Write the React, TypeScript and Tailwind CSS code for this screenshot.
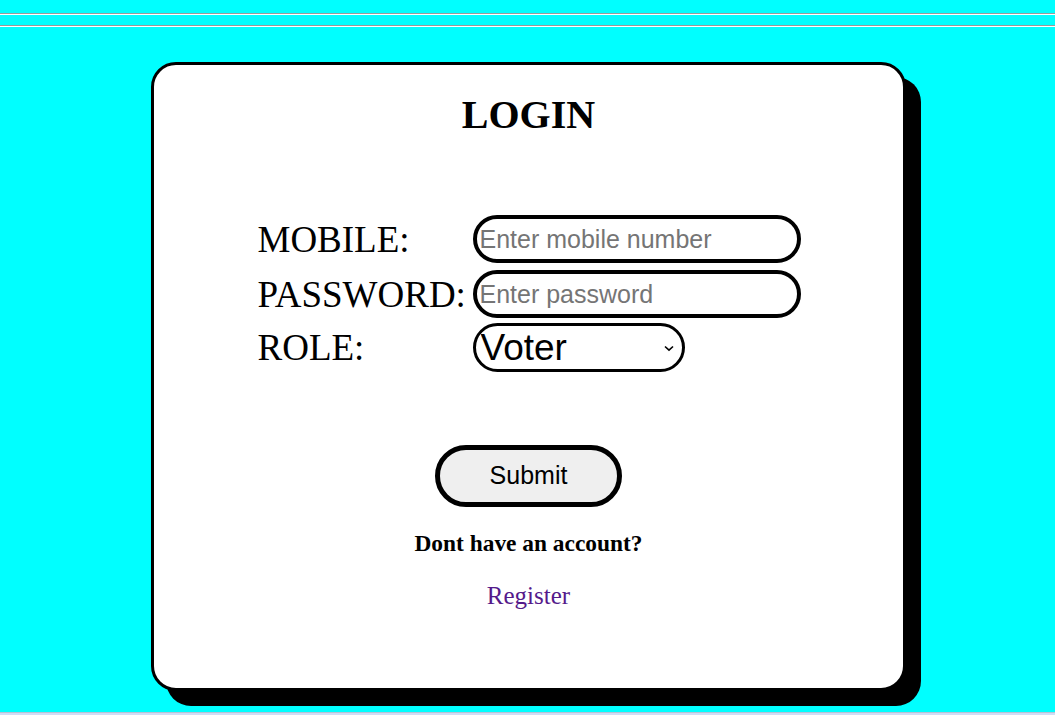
import React from "react";

export default function App() {
  return (
    <div className="w-full h-[715px] flex flex-col overflow-hidden font-['Liberation_Serif',serif]">
      <div className="bg-[#00ffff] h-[712px] flex flex-col shrink-0">
        <div className="h-[13px] shrink-0" />
        <div className="h-px bg-[#9a9a9a] shrink-0" />
        <div className="h-px bg-white shrink-0" />
        <div className="h-[10px] shrink-0" />
        <div className="h-px bg-[#9a9a9a] shrink-0" />
        <div className="h-px bg-white shrink-0" />
        <div className="h-[35px] shrink-0" />
        <div className="ml-[151px] w-[755px] h-[629px] shrink-0 border-[3px] border-black rounded-[25px] bg-white shadow-[15px_15px_0_0_#000] flex flex-col items-center">
          <h1 className="mt-[30px] text-[40px] leading-[40px] font-bold text-black">LOGIN</h1>
          <div className="mt-[80px] flex flex-col w-[543px] ml-[1px]">
            <div className="flex items-center h-[48px]">
              <label className="w-[215px] text-[37px] leading-[37px] text-black">MOBILE:</label>
              <input
                type="text"
                placeholder="Enter mobile number"
                className="w-[328px] h-[48px] border-4 border-black rounded-full bg-white pl-[3px] pr-3 text-[25px] font-['Liberation_Sans',Arial,sans-serif] text-black placeholder:text-[#757575] outline-none"
              />
            </div>
            <div className="flex items-center h-[48px] mt-[7px]">
              <label className="w-[215px] text-[37px] leading-[37px] text-black whitespace-nowrap">PASSWORD:</label>
              <input
                type="password"
                placeholder="Enter password"
                className="w-[328px] h-[48px] border-4 border-black rounded-full bg-white pl-[3px] pr-3 text-[25px] font-['Liberation_Sans',Arial,sans-serif] text-black placeholder:text-[#757575] outline-none"
              />
            </div>
            <div className="flex items-center h-[49px] mt-[5px]">
              <label className="w-[215px] text-[37px] leading-[37px] text-black">ROLE:</label>
              <div className="relative w-[212px] h-[49px]">
                <select
                  defaultValue="Voter"
                  className="appearance-none w-full h-full border-[3px] border-black rounded-full bg-white pl-[5px] pr-8 text-[37px] leading-[40px] font-['Liberation_Sans',Arial,sans-serif] text-black outline-none"
                >
                  <option>Voter</option>
                  <option>Group</option>
                </select>
                <svg
                  className="absolute left-[191px] top-[22px] pointer-events-none"
                  width="10"
                  height="7"
                  viewBox="0 0 10 7"
                  fill="none"
                >
                  <path d="M1 1.5 L5 5.2 L9 1.5" stroke="#000" strokeWidth="1.6" />
                </svg>
              </div>
            </div>
          </div>
          <button className="mt-[73px] w-[187px] h-[62px] shrink-0 border-[5px] border-black rounded-full bg-[#efefef] text-[25px] font-['Liberation_Sans',Arial,sans-serif] text-black">
            Submit
          </button>
          <h3 className="mt-[25px] text-[23.4px] leading-[23.4px] font-bold text-black">Dont have an account?</h3>
          <a href="#" className="mt-[28px] text-[25px] leading-[25px] text-[#551a8b] no-underline">
            Register
          </a>
        </div>
      </div>
      <div className="h-px bg-[#b8c2d6] shrink-0" />
      <div className="flex-1 bg-[#d0dcf5]" />
    </div>
  );
}
